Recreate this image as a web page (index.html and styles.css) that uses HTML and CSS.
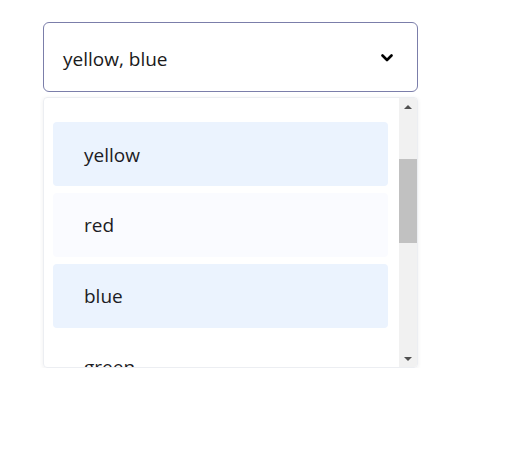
FILE: index.html
```html
<!DOCTYPE html>
<html>
<head>
<meta charset="utf-8">
<link rel="stylesheet" href="styles.css">
</head>
<body>
<div class="wrap">
  <div class="select">
    <span class="value">yellow, blue</span>
    <svg class="chev" width="12" height="8" viewBox="0 0 12 8"><path d="M1.5 1.5 L6 6 L10.5 1.5" fill="none" stroke="#000" stroke-width="2.6" stroke-linecap="round" stroke-linejoin="round"/></svg>
  </div>
  <div class="menu">
    <div class="list">
      <div class="opt sel">yellow</div>
      <div class="opt hover">red</div>
      <div class="opt sel">blue</div>
      <div class="opt">green</div>
    </div>
    <div class="sb">
      <div class="arrow up"></div>
      <div class="track"><div class="thumb"></div></div>
      <div class="arrow down"></div>
    </div>
  </div>
</div>
</body>
</html>
```
FILE: styles.css
```css
html, body { margin: 0; padding: 0; background: #fff; }
body { font-family: "Open Sans", "Noto Sans", sans-serif; color: #1a1a1a; }
.wrap { padding: 22px 0 0 43px; width: 375px; }
.select {
  box-sizing: border-box; height: 70px;
  border: 1px solid #7b7eaa; border-radius: 6px;
  display: flex; align-items: center; justify-content: space-between;
  padding: 0 24px 0 19px;
  font-size: 19px;
}
.value { position: relative; top: 2px; }
.chev { position: relative; top: 1px; }
.menu {
  margin-top: 5px; height: 271px; box-sizing: border-box;
  border: 1px solid #eceef2; border-radius: 4px;
  box-shadow: 0 1px 4px rgba(0,0,0,0.07);
  display: flex; overflow: hidden; width: 375px;
}
.list { flex: 1; padding: 24px 11px 0 9px; overflow: hidden; display: flex; flex-direction: column; gap: 7px; }
.opt {
  flex: none; height: 64px; border-radius: 4px;
  display: flex; align-items: center; padding-left: 31px;
  font-size: 19px; color: #1c1c24;
}
.opt.sel { background: #ebf3fe; }
.opt.hover { background: #fafbff; }
.opt:first-child { padding-top: 2px; box-sizing: border-box; }
.sb { width: 18px; background: #f1f1f1; display: flex; flex-direction: column; }
.arrow { height: 17px; display: flex; align-items: center; justify-content: center; }
.arrow::after { content: ""; border-left: 4px solid transparent; border-right: 4px solid transparent; }
.arrow.up::after { border-bottom: 4px solid #505050; }
.arrow.down::after { border-top: 4px solid #505050; }
.track { flex: 1; padding-top: 44px; }
.thumb { height: 84px; background: #c1c1c1; }
```
